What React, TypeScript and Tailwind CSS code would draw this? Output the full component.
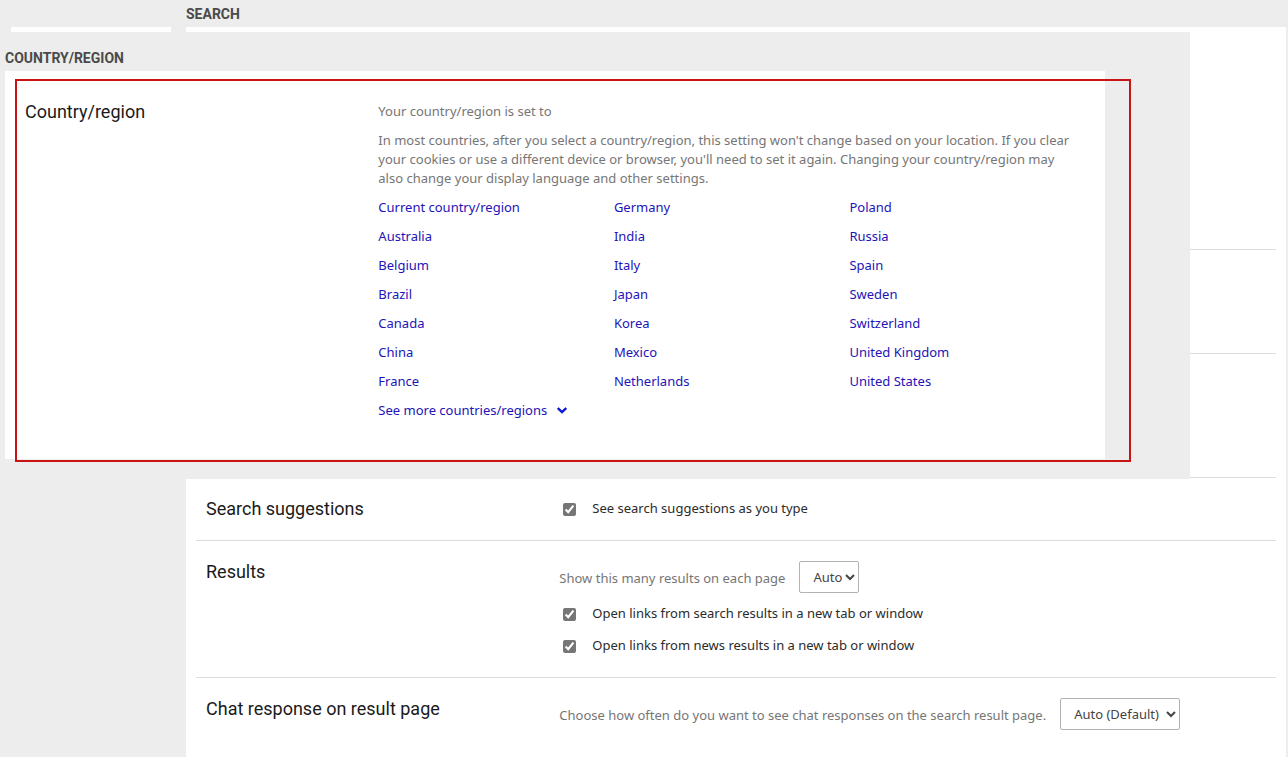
import React from 'react';

const countries = [
    ['Current country/region', 'Germany', 'Poland'],
    ['Australia', 'India', 'Russia'],
    ['Belgium', 'Italy', 'Spain'],
    ['Brazil', 'Japan', 'Sweden'],
    ['Canada', 'Korea', 'Switzerland'],
    ['China', 'Mexico', 'United Kingdom'],
    ['France', 'Netherlands', 'United States'],
];

const Heading: React.FC<{ children: React.ReactNode }> = ({ children }) => (
    <h2 className="font-['Roboto',sans-serif] text-[18px] leading-[32px] text-[#1a1a1a]">{children}</h2>
);

const Section: React.FC<{ title: string; last?: boolean; children: React.ReactNode }> = ({ title, last, children }) => (
    <section className={`grid grid-cols-3 px-[10px] py-[15px] ${last ? '' : 'border-b border-[#dcdcdc]'}`}>
        <Heading>{title}</Heading>
        <div className="col-span-2">{children}</div>
    </section>
);

const CheckRow: React.FC<{ id: string; label: string }> = ({ id, label }) => (
    <div className="flex h-8 items-center gap-4 pl-1">
        <input id={id} type="checkbox" defaultChecked className="size-[13px] accent-[#767676]" />
        <label htmlFor={id} className="pb-[2px] text-[#2b2b2b]">{label}</label>
    </div>
);

const SelectRow: React.FC<{ id: string; label: string; options: string[]; width: string }> = ({ id, label, options, width }) => (
    <div className="flex items-center gap-[14px] py-[5px]">
        <label htmlFor={id} className="pt-[2px]">{label}</label>
        <select id={id} className={`h-8 rounded-[2px] border border-[#b2b2b2] bg-white pl-[9px] text-[#444] ${width}`}>
            {options.map((option) => (
                <option key={option}>{option}</option>
            ))}
        </select>
    </div>
);

const CountryPanel: React.FC = () => (
    <div className="absolute top-8 right-[98px] left-0 bg-[#ededed] pr-[85px] pb-5 pl-[5px]">
        <h1 className="pt-4 pb-[3px] font-['Roboto',sans-serif] text-[14px] font-bold leading-[20px] text-[#4a4a4a]">COUNTRY/REGION</h1>
        <section className="grid grid-cols-3 bg-white px-5 pt-[25px] pb-[39px]">
            <Heading>Country/region</Heading>
            <div className="col-span-2 flex flex-col gap-[10px] pt-[6px]">
                <p>Your country/region is set to</p>
                <p className="pr-2">
                    In most countries, after you select a country/region, this setting won't change based on your location. If you clear
                    your cookies or use a different device or browser, you'll need to set it again. Changing your country/region may
                    also change your display language and other settings.
                </p>
                <ul className="grid grid-cols-3 gap-y-[10px] text-[#2313b8]">
                    {countries.flat().map((country) => (
                        <li key={country}>
                            <a href="#" className="hover:underline">{country}</a>
                        </li>
                    ))}
                </ul>
                <button type="button" className="flex items-center gap-[10px] self-start text-[#2313b8]">
                    See more countries/regions
                    <svg viewBox="0 0 10 7" className="h-[7px] w-[10px]" fill="none" stroke="#0c18d2" strokeWidth="2.4">
                        <path d="M0.8 1 5 5 9.2 1" />
                    </svg>
                </button>
            </div>
        </section>
        {/* Highlight frame */}
        <div className="pointer-events-none absolute top-[47px] right-[59px] bottom-[17px] left-[15px] border-2 border-[#c81414]" />
    </div>
);

const App: React.FC = () => {
    return (
        <div className="relative flex min-h-screen gap-[15px] bg-[#ededed] pr-[2px] pl-[11px] font-['Noto_Sans',sans-serif] text-[13px] leading-[19px] text-[#767676]">
            <aside className="w-40 shrink-0 pt-[27px]">
                <div className="h-[200px] bg-white" />
            </aside>

            <main className="flex flex-1 flex-col">
                <h1 className="pt-1 pb-[3px] font-['Roboto',sans-serif] text-[14px] font-bold leading-[20px] text-[#4a4a4a]">SEARCH</h1>
                <div className="flex-1 bg-white px-[10px]">
                    <div className="h-[223px] border-b border-[#dcdcdc]" />
                    <div className="h-[104px] border-b border-[#dcdcdc]" />
                    <div className="h-[124px] border-b border-[#dcdcdc]" />
                    <Section title="Search suggestions">
                        <CheckRow id="suggestions" label="See search suggestions as you type" />
                    </Section>
                    <Section title="Results">
                        <SelectRow id="count" label="Show this many results on each page" options={['Auto', '10', '15', '30', '50']} width="w-[60px]" />
                        <CheckRow id="search-links" label="Open links from search results in a new tab or window" />
                        <CheckRow id="news-links" label="Open links from news results in a new tab or window" />
                    </Section>
                    <Section title="Chat response on result page" last>
                        <SelectRow
                            id="chat"
                            label="Choose how often do you want to see chat responses on the search result page."
                            options={['Auto (Default)', 'More', 'Less', 'Off']}
                            width="w-[120px]"
                        />
                    </Section>
                </div>
            </main>

            <CountryPanel />
        </div>
    );
};

export default App;
